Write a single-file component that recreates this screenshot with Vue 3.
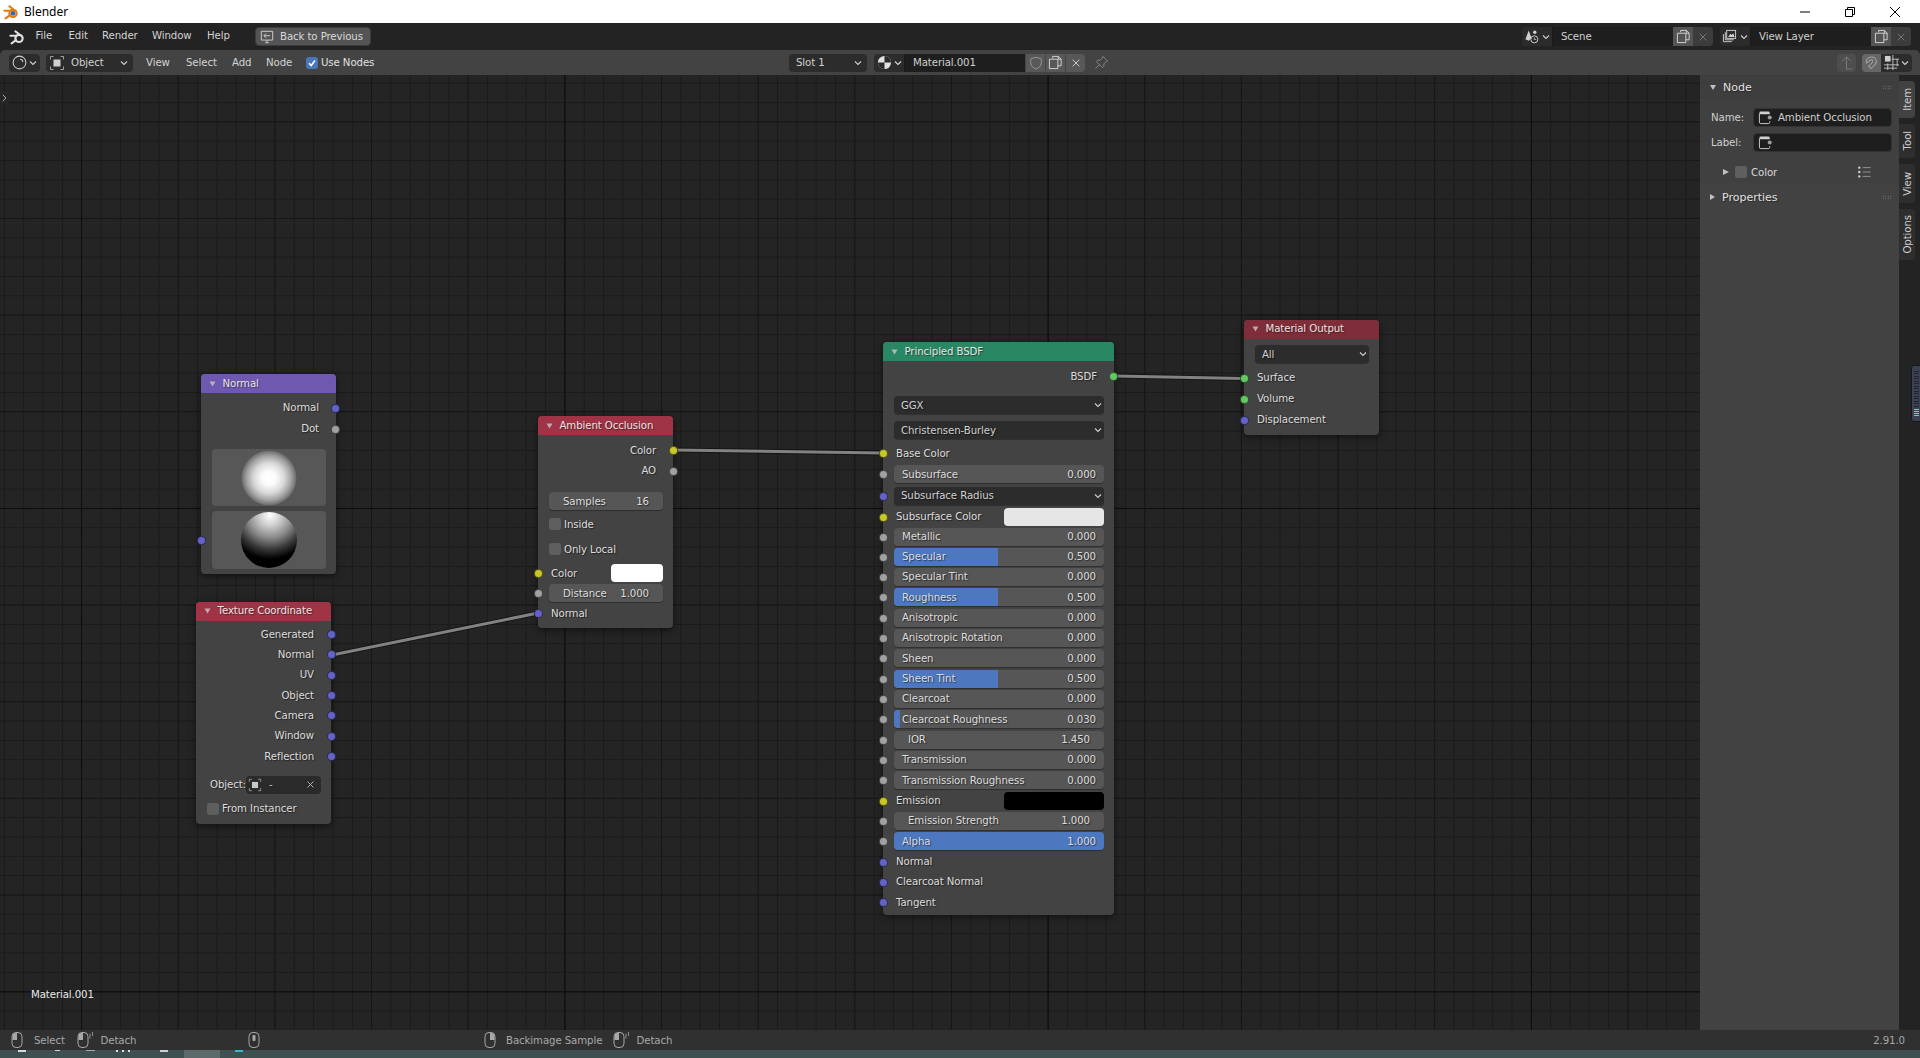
<template>
  <div class="app">
    <!-- shared icon shapes -->
    <svg class="defs" width="0" height="0">
      <defs>
        <symbol id="i-logo" viewBox="0 0 16 16">
          <circle cx="10" cy="9.4" r="3.6" fill="none" stroke="currentColor" stroke-width="2.2" />
          <path d="M10 5 6.400 2.400M7 6.800H1.400M7 11.200 2.600 14.400" fill="none" stroke="currentColor" stroke-width="2.100" stroke-linecap="round" />
        </symbol>
        <symbol id="i-shader" viewBox="0 0 16 16">
          <circle cx="8" cy="8" r="6.800" fill="none" stroke="currentColor" stroke-width="1.100" />
          <path d="M8.600 4.600c1.500 0 2.800 1.200 2.900 2.800" fill="none" stroke="currentColor" stroke-width="1.100" />
        </symbol>
        <symbol id="i-object" viewBox="0 0 16 16">
          <rect x="4.500" y="4.500" width="7" height="7" fill="currentColor" />
          <path d="M1.500 4.500v-3h3M11.500 1.500h3v3M14.500 11.500v3h-3M4.500 14.500h-3v-3" fill="none" stroke="currentColor" stroke-opacity=".7" />
        </symbol>
        <symbol id="i-chevron" viewBox="0 0 8 6">
          <path d="M1 1.500 4 4.500 7 1.500" fill="none" stroke="currentColor" stroke-width="1.100" />
        </symbol>
        <symbol id="i-x" viewBox="0 0 12 12">
          <path d="M2 2l8 8M10 2l-8 8" fill="none" stroke="currentColor" stroke-width="1.100" />
        </symbol>
        <symbol id="i-copy" viewBox="0 0 16 16">
          <path d="M5 3.500V1.500h6l3 3v7h-3.500M11 1.500v3h3M1.500 4.500H10.500V14.500H1.500z" fill="none" stroke="currentColor" stroke-width="1" />
        </symbol>
        <symbol id="i-shield" viewBox="0 0 16 16">
          <path d="M2 3.200 8 1.500l6 1.700v5C14 11.500 11 13.600 8 14.800 5 13.600 2 11.500 2 8.200z" fill="none" stroke="currentColor" stroke-width="1" />
        </symbol>
        <symbol id="i-pin" viewBox="0 0 16 16">
          <path d="M9.500 1.500 14.500 6.500 13 7 10.500 9.500 10.500 12 9 13.500 2.500 7 4 5.500 6.500 5.500 9 3zM5.500 10.500 1.500 14.500" fill="none" stroke="currentColor" stroke-width="1" />
        </symbol>
        <symbol id="i-scene" viewBox="0 0 16 16">
          <path d="M5 1.500 8 9.500 5 12.500 1.500 11z" fill="currentColor" />
          <circle cx="11.500" cy="3.500" r="1.800" fill="currentColor" />
          <circle cx="11" cy="11" r="3.800" fill="none" stroke="currentColor" />
          <path d="M11 9v2.200h2" fill="none" stroke="currentColor" stroke-width=".8" />
        </symbol>
        <symbol id="i-layer" viewBox="0 0 16 16">
          <rect x="5" y="1.500" width="9.500" height="8.500" fill="none" stroke="currentColor" />
          <path d="M6.500 8.500 9 5l1.500 1.500L12 4.500l1.500 4z" fill="currentColor" />
          <path d="M3.500 3.500v8h9M1.500 5.500v8h9" fill="none" stroke="currentColor" />
        </symbol>
        <symbol id="i-back" viewBox="0 0 16 16">
          <path d="M1.500 1.500h13v10h-13zM6 14.500h4M8 11.500v3M11.500 6.500h-7M7 4 4.500 6.500 7 9" fill="none" stroke="currentColor" />
        </symbol>
        <symbol id="i-up" viewBox="0 0 16 16">
          <path d="M8 15V2M3.500 6.500 8 2l4.500 4.500M8 15h6" fill="none" stroke="currentColor" />
        </symbol>
        <symbol id="i-magnet" viewBox="0 0 16 16">
          <path d="M2.500 8.500A5.500 5.500 0 0 1 13 5.500c.8 2.200-.3 4-1.700 5.200L7.500 14.500 5 12l3.800-3.800c1.200-1.200.6-3-1-3-1.400 0-2 .8-2.800 1.800z" fill="none" stroke="currentColor" stroke-width="1.100" />
        </symbol>
        <symbol id="i-snap" viewBox="0 0 16 16">
          <rect x="1" y="1" width="6" height="6" fill="currentColor" />
          <path d="M9.500 0v16M14 4v8M0 10.500h16M4 9v7M8 4.500h8M0 14h14" fill="none" stroke="currentColor" stroke-width=".9" />
        </symbol>
        <symbol id="i-nodefield" viewBox="0 0 16 16">
          <path d="M1.500 3A1.500 1.500 0 0 1 3 1.500h8A1.500 1.500 0 0 1 12.500 3v1.500h-11z" fill="currentColor" />
          <path d="M1.500 4v9A1.500 1.500 0 0 0 3 14.500h8A1.500 1.500 0 0 0 12.500 13v-1" fill="none" stroke="currentColor" />
          <circle cx="12.500" cy="8" r="2.200" fill="currentColor" fill-opacity=".7" />
        </symbol>
        <symbol id="i-list" viewBox="0 0 16 16">
          <circle cx="2" cy="3" r="1.400" fill="currentColor" />
          <circle cx="2" cy="8" r="1.400" fill="currentColor" />
          <circle cx="2" cy="13" r="1.400" fill="currentColor" />
          <path d="M6 3h9M6 8h9M6 13h9" fill="none" stroke="currentColor" stroke-opacity=".7" />
        </symbol>
        <symbol id="i-mouse-left" viewBox="0 0 12 16">
          <rect x="1" y=".5" width="10" height="15" rx="4" fill="none" stroke="currentColor" />
          <path d="M1.500 8V4.500A3.500 3.500 0 0 1 5 1h1v7z" fill="currentColor" />
        </symbol>
        <symbol id="i-mouse-right" viewBox="0 0 12 16">
          <rect x="1" y=".5" width="10" height="15" rx="4" fill="none" stroke="currentColor" />
          <path d="M10.500 8V4.500A3.500 3.500 0 0 0 7 1H6v7z" fill="currentColor" />
        </symbol>
        <symbol id="i-mouse-mid" viewBox="0 0 12 16">
          <rect x="1" y=".5" width="10" height="15" rx="4" fill="none" stroke="currentColor" />
          <rect x="4.500" y="3" width="3" height="6" rx="1" fill="currentColor" />
        </symbol>
        <symbol id="i-mouse-drag" viewBox="0 0 16 16">
          <rect x="1" y=".5" width="10" height="15" rx="4" fill="none" stroke="currentColor" />
          <path d="M1.500 8V4.500A3.500 3.500 0 0 1 5 1h1v7z" fill="currentColor" />
          <path d="M13 1.500v5M15.500 0v4" fill="none" stroke="currentColor" stroke-width=".8" />
        </symbol>
      </defs>
    </svg>

    <div class="titlebar">
      <svg class="title-logo" width="16" height="16" viewBox="0 0 16 16">
        <use href="#i-logo" width="16" height="16" />
        <circle cx="10" cy="9.400" r="2.300" fill="#2b6aa8" />
      </svg>
      <span class="title-text">Blender</span>
      <div class="win-controls">
        <svg width="10" height="10" viewBox="0 0 10 10"><path d="M0 5h10" stroke="#000" fill="none" /></svg>
        <svg width="10" height="10" viewBox="0 0 10 10"><path d="M.5 2.500h7v7h-7zM2.500 2.500v-2h7v7h-2" stroke="#000" fill="none" /></svg>
        <svg width="10" height="10" viewBox="0 0 10 10"><path d="M0 0l10 10M10 0 0 10" stroke="#000" fill="none" /></svg>
      </div>
    </div>

    <div class="topbar">
      <svg class="top-logo" width="16" height="16"><use href="#i-logo" /></svg>
      <span v-for="m in topMenus" :key="m.label" class="top-menu" :class="m.cls">{{ m.label }}</span>
      <button class="back-btn">
        <svg width="14" height="14"><use href="#i-back" /></svg>
        <span>Back to Previous</span>
      </button>
      <div class="top-right">
        <div class="id-group">
          <span class="id-type">
            <svg width="15" height="15"><use href="#i-scene" /></svg>
            <svg width="8" height="6"><use href="#i-chevron" /></svg>
          </span>
          <span class="id-name">Scene</span>
          <span class="id-btn"><svg width="15" height="15"><use href="#i-copy" /></svg></span>
          <span class="id-btn id-dim"><svg width="10" height="10"><use href="#i-x" /></svg></span>
        </div>
        <div class="id-group">
          <span class="id-type">
            <svg width="15" height="15"><use href="#i-layer" /></svg>
            <svg width="8" height="6"><use href="#i-chevron" /></svg>
          </span>
          <span class="id-name">View Layer</span>
          <span class="id-btn"><svg width="15" height="15"><use href="#i-copy" /></svg></span>
          <span class="id-btn id-dim"><svg width="10" height="10"><use href="#i-x" /></svg></span>
        </div>
      </div>
    </div>

    <div class="ed-header">
      <div class="hdr-left">
        <span class="drop drop-type">
          <svg width="15" height="15"><use href="#i-shader" /></svg>
          <svg width="8" height="6"><use href="#i-chevron" /></svg>
        </span>
        <span class="drop drop-object">
          <svg width="16" height="16"><use href="#i-object" /></svg>
          <span class="drop-label">Object</span>
          <svg width="8" height="6"><use href="#i-chevron" /></svg>
        </span>
        <span class="hdr-menu hm-view">View</span>
        <span class="hdr-menu hm-select">Select</span>
        <span class="hdr-menu hm-add">Add</span>
        <span class="hdr-menu hm-node">Node</span>
        <span class="use-nodes">
          <span class="check-on">
            <svg width="10" height="10" viewBox="0 0 10 10"><path d="M2 5.200 4.200 7.500 8 2.500" fill="none" stroke="#fff" stroke-width="1.600" /></svg>
          </span>
          Use Nodes
        </span>
      </div>
      <span class="drop drop-slot">
        <span class="drop-label">Slot 1</span>
        <svg width="8" height="6"><use href="#i-chevron" /></svg>
      </span>
      <div class="mat-group">
        <span class="mat-type">
          <svg width="15" height="15" viewBox="0 0 16 16">
            <circle cx="8" cy="8" r="7" fill="#e0e0e0" />
            <path d="M8 1a7 7 0 0 1 7 7H8zM8 8v7a7 7 0 0 1-7-7z" fill="#2a2a2a" />
          </svg>
          <svg width="8" height="6"><use href="#i-chevron" /></svg>
        </span>
        <span class="mat-name">Material.001</span>
        <span class="mat-btn"><svg class="shield" width="14" height="14"><use href="#i-shield" /></svg></span>
        <span class="mat-btn"><svg width="15" height="15"><use href="#i-copy" /></svg></span>
        <span class="mat-btn"><svg width="10" height="10"><use href="#i-x" /></svg></span>
      </div>
      <svg class="pin" width="15" height="15"><use href="#i-pin" /></svg>
      <div class="hdr-right">
        <span class="tool-btn tool-up"><svg width="15" height="15"><use href="#i-up" /></svg></span>
        <span class="tool-btn tool-magnet"><svg width="15" height="15"><use href="#i-magnet" /></svg></span>
        <span class="tool-btn tool-snap">
          <svg width="15" height="15"><use href="#i-snap" /></svg>
          <svg width="8" height="6"><use href="#i-chevron" /></svg>
        </span>
      </div>
    </div>

    <div class="ed-body">
      <div class="canvas">
        <span class="region-arrow">
          <svg width="5" height="8" viewBox="0 0 5 8"><path d="M.8.800 4 4 .8 7.200" fill="none" stroke="#a8a8a8" /></svg>
        </span>

        <svg class="links" width="1700" height="955">
          <g v-for="l in links" :key="l">
            <path :d="l" class="link-out" />
            <path :d="l" class="link-in" />
          </g>
        </svg>

        <div v-for="n in nodes" :key="n.id" class="node" :class="'node-' + n.id">
          <div class="node-head">
            <svg class="node-tri" width="7" height="6" viewBox="0 0 7 6"><path d="M.500.500h6L3.500 5.500z" fill="#c8c8c8" fill-opacity=".8" /></svg>
            <span>{{ n.title }}</span>
          </div>
          <div
            v-for="(r, i) in n.rows"
            :key="i"
            class="row"
            :class="'row-' + r.kind"
            :style="{ height: r.h + 'px' }"
          >
            <i v-if="r.sock" class="socket" :class="[r.kind === 'out' ? 'socket-out' : 'socket-in', 'sock-' + r.sock]" />

            <span v-if="r.kind === 'out'" class="lbl-out">{{ r.label }}</span>
            <span v-else-if="r.kind === 'in'" class="lbl-in">{{ r.label }}</span>

            <div v-else-if="r.kind === 'select'" class="field field-select">
              <span>{{ r.label }}</span>
              <svg width="8" height="6"><use href="#i-chevron" /></svg>
            </div>

            <div v-else-if="r.kind === 'slider'" class="field field-slider" :class="{ 'field-num': r.num }">
              <div class="slider-fill" :style="{ width: (r.fill || 0) + '%' }"></div>
              <span class="slider-lbl">{{ r.label }}</span>
              <span class="slider-val">{{ r.value }}</span>
            </div>

            <template v-else-if="r.kind === 'color'">
              <span class="lbl-in">{{ r.label }}</span>
              <span class="swatch" :style="{ width: r.w + 'px', background: r.color }"></span>
            </template>

            <label v-else-if="r.kind === 'check'" class="check-row">
              <span class="check-box"></span>
              <span>{{ r.label }}</span>
            </label>

            <div v-else-if="r.kind === 'sphere'" class="sphere-box">
              <div class="sphere" :class="r.cls"></div>
            </div>

            <div v-else-if="r.kind === 'object'" class="object-row">
              <span class="object-lbl">Object:</span>
              <span class="object-field">
                <svg width="14" height="14"><use href="#i-object" /></svg>
                <span class="object-dash">-</span>
                <svg width="9" height="9"><use href="#i-x" /></svg>
              </span>
            </div>
          </div>
        </div>

        <span class="canvas-label">Material.001</span>
      </div>

      <aside class="sidebar">
        <div class="panel-head">
          <svg width="6" height="5" viewBox="0 0 6 5"><path d="M0 0h6L3 5z" fill="#c0c0c0" /></svg>
          <span>Node</span>
          <i class="grip"></i>
        </div>
        <div class="panel-body">
          <div class="prop-row">
            <span class="prop-lbl">Name:</span>
            <span class="prop-field">
              <svg width="15" height="15"><use href="#i-nodefield" /></svg>
              <span>Ambient Occlusion</span>
            </span>
          </div>
          <div class="prop-row">
            <span class="prop-lbl">Label:</span>
            <span class="prop-field">
              <svg width="15" height="15"><use href="#i-nodefield" /></svg>
            </span>
          </div>
          <div class="color-row">
            <svg width="6" height="6" viewBox="0 0 6 6"><path d="M0 0l6 3-6 3z" fill="#c0c0c0" /></svg>
            <span class="color-box"></span>
            <span>Color</span>
            <svg class="color-list" width="15" height="14"><use href="#i-list" /></svg>
          </div>
        </div>
        <div class="panel-head panel-props">
          <svg width="5" height="6" viewBox="0 0 5 6"><path d="M0 0l5 3-5 3z" fill="#c0c0c0" /></svg>
          <span>Properties</span>
          <i class="grip"></i>
        </div>
      </aside>

      <div class="tabs">
        <span v-for="t in tabs" :key="t.label" class="tab" :class="{ 'tab-active': t.active }" :style="{ height: t.h + 'px' }">
          <span class="tab-text">{{ t.label }}</span>
        </span>
      </div>
    </div>

    <div class="statusbar">
      <svg class="st-left" width="12" height="16"><use href="#i-mouse-left" /></svg>
      <span class="st-select">Select</span>
      <svg width="16" height="16"><use href="#i-mouse-drag" /></svg>
      <span class="st-detach st-detach-a">Detach</span>
      <svg width="12" height="16"><use href="#i-mouse-mid" /></svg>
      <svg class="st-right" width="12" height="16"><use href="#i-mouse-right" /></svg>
      <span class="st-back">Backimage Sample</span>
      <svg width="16" height="16"><use href="#i-mouse-drag" /></svg>
      <span class="st-detach">Detach</span>
      <span class="st-version">2.91.0</span>
    </div>

    <div class="taskbar">
      <i
        v-for="t in taskbarMarks"
        :key="t.x"
        class="task-mark"
        :style="{ left: t.x + 'px', width: t.w + 'px', height: t.h + 'px', background: t.c }"
      ></i>
    </div>

    <div class="edge-grip"><i class="edge-dashes"></i><i class="edge-teal"></i></div>
  </div>
</template>

<script setup>
const ROW = 20.33

const out = (label, sock, h = ROW) => ({ kind: 'out', label, sock, h })
const inp = (label, sock, h = ROW) => ({ kind: 'in', label, sock, h })
const gap = (h) => ({ kind: 'gap', h })
const select = (label, sock, h = ROW) => ({ kind: 'select', label, sock, h })
const slider = (label, value, fill = 0, h = ROW) => ({ kind: 'slider', label, value, fill, sock: 'grey', h })
const num = (label, value, sock = 'grey', h = ROW) => ({ kind: 'slider', label, value, num: true, sock, h })
const color = (label, c, w, h = ROW) => ({ kind: 'color', label, color: c, w, sock: 'yellow', h })
const check = (label, h = ROW) => ({ kind: 'check', label, h })

const topMenus = [
  { label: 'File', cls: 'tm-file' },
  { label: 'Edit', cls: 'tm-edit' },
  { label: 'Render', cls: 'tm-render' },
  { label: 'Window', cls: 'tm-window' },
  { label: 'Help', cls: 'tm-help' },
]

const links = ['M673 375 L883 378', 'M332 580 L538 538', 'M1114 301 L1243 303.500']

const nodes = [
  {
    id: 'normal',
    title: 'Normal',
    rows: [
      gap(4),
      out('Normal', 'blue', 21),
      out('Dot', 'grey', 21),
      gap(10),
      { kind: 'sphere', cls: 'sphere-a', h: 57 },
      gap(5),
      { kind: 'sphere', cls: 'sphere-b', h: 58, sock: 'blue' },
      gap(5),
    ],
  },
  {
    id: 'texcoord',
    title: 'Texture Coordinate',
    rows: [
      gap(3),
      out('Generated', 'blue'),
      out('Normal', 'blue'),
      out('UV', 'blue'),
      out('Object', 'blue'),
      out('Camera', 'blue'),
      out('Window', 'blue'),
      out('Reflection', 'blue'),
      gap(8.700),
      { kind: 'object', h: 20 },
      gap(4),
      check('From Instancer', 20),
      gap(4.700),
    ],
  },
  {
    id: 'ao',
    title: 'Ambient Occlusion',
    rows: [
      gap(5),
      out('Color', 'yellow', 20),
      out('AO', 'grey', 21),
      gap(10),
      { ...num('Samples', '16', null), h: 20 },
      gap(2),
      check('Inside', 22),
      gap(3),
      check('Only Local', 22),
      gap(3),
      color('Color', '#ffffff', 52, 20),
      num('Distance', '1.000', 'grey', 20),
      inp('Normal', 'blue', 20),
      gap(5),
    ],
  },
  {
    id: 'bsdf',
    title: 'Principled BSDF',
    rows: [
      gap(5),
      out('BSDF', 'green', 20),
      gap(6.500),
      select('GGX', null, 25),
      select('Christensen-Burley', null, 25),
      inp('Base Color', 'yellow', 21),
      slider('Subsurface', '0.000', 0, 21),
      select('Subsurface Radius', 'blue', 22),
      color('Subsurface Color', '#e6e6e6', 100, 20),
      slider('Metallic', '0.000', 0, 20),
      slider('Specular', '0.500', 49.400),
      slider('Specular Tint', '0.000'),
      slider('Roughness', '0.500', 49.400),
      slider('Anisotropic', '0.000'),
      slider('Anisotropic Rotation', '0.000'),
      slider('Sheen', '0.000'),
      slider('Sheen Tint', '0.500', 49.400),
      slider('Clearcoat', '0.000'),
      slider('Clearcoat Roughness', '0.030', 3),
      num('IOR', '1.450'),
      slider('Transmission', '0.000'),
      slider('Transmission Roughness', '0.000'),
      color('Emission', '#000000', 100),
      num('Emission Strength', '1.000'),
      slider('Alpha', '1.000', 100),
      inp('Normal', 'blue'),
      inp('Clearcoat Normal', 'blue'),
      inp('Tangent', 'blue'),
      gap(3),
    ],
  },
  {
    id: 'output',
    title: 'Material Output',
    rows: [
      gap(4),
      select('All', null, 22),
      gap(2),
      inp('Surface', 'green', 21),
      inp('Volume', 'green', 21),
      inp('Displacement', 'blue', 21),
      gap(5),
    ],
  },
]

const tabs = [
  { label: 'Item', h: 37, active: true },
  { label: 'Tool', h: 34 },
  { label: 'View', h: 39 },
  { label: 'Options', h: 51 },
]

const taskbarMarks = [
  { x: 18, w: 8, h: 2, c: '#d8d8d8' },
  { x: 55, w: 5, h: 1, c: '#d8d8d8' },
  { x: 86, w: 9, h: 1, c: '#a8a8a8' },
  { x: 116, w: 2, h: 2, c: '#e0e0e0' },
  { x: 122, w: 2, h: 2, c: '#e0e0e0' },
  { x: 128, w: 2, h: 2, c: '#e0e0e0' },
  { x: 160, w: 8, h: 2, c: '#d0d0d0' },
  { x: 184, w: 36, h: 8, c: '#5d6a6a' },
  { x: 235, w: 8, h: 2, c: '#2bbcd0' },
]
</script>

<style scoped>
.app {
  position: relative;
  width: 1920px;
  height: 1058px;
  display: flex;
  flex-direction: column;
  overflow: hidden;
  background: #232323;
  color: #d8d8d8;
  font-family: "DejaVu Sans", sans-serif;
  font-size: 10.2px;
  letter-spacing: -0.1px;
}
.defs {
  position: absolute;
}
svg {
  flex-shrink: 0;
  display: block;
}

/* window title */
.titlebar {
  height: 23px;
  flex-shrink: 0;
  display: flex;
  align-items: center;
  background: #fff;
  color: #000;
  font-family: "Noto Sans", sans-serif;
  font-size: 12px;
  letter-spacing: 0;
}
.title-logo {
  margin-left: 3px;
  color: #e8790f;
}
.title-text {
  margin-left: 5px;
}
.win-controls {
  margin-left: auto;
  display: flex;
  gap: 35px;
  padding-right: 20px;
}

/* top bar */
.topbar {
  height: 27px;
  flex-shrink: 0;
  display: flex;
  align-items: center;
  background: #232323;
}
.top-logo {
  margin-left: 9px;
  margin-right: 10.500px;
  color: #e0e0e0;
}
.top-menu {
  margin-top: -2px;
  color: #d4d4d4;
}
.tm-file { width: 33px; }
.tm-edit { width: 33.500px; }
.tm-render { width: 50px; }
.tm-window { width: 55px; }
.tm-help { width: 48px; }
.back-btn {
  width: 116px;
  height: 19px;
  padding: 0 0 0 4px;
  display: flex;
  align-items: center;
  gap: 6px;
  border: 1px solid #3b3b3b;
  border-radius: 4px;
  background: #545454;
  color: #d8d8d8;
  font: inherit;
  letter-spacing: inherit;
  white-space: nowrap;
}
.top-right {
  margin-left: auto;
  display: flex;
  gap: 7px;
  padding-right: 9px;
}
.id-group {
  display: flex;
  height: 19px;
  border-radius: 4px;
  overflow: hidden;
  box-shadow: inset 0 0 0 1px #333;
}
.id-type {
  width: 31px;
  display: flex;
  align-items: center;
  justify-content: center;
  gap: 3px;
  background: #2b2b2b;
  border-right: 1px solid #1a1a1a;
  box-sizing: border-box;
  color: #d0d0d0;
}
.id-name {
  width: 120px;
  display: flex;
  align-items: center;
  padding-left: 8px;
  background: #1e1e1e;
  box-sizing: border-box;
  color: #d0d0d0;
}
.id-btn {
  width: 20px;
  display: flex;
  align-items: center;
  justify-content: center;
  background: #545454;
  color: #d8d8d8;
}
.id-dim {
  background: #3c3c3c;
  color: #7c7c7c;
}

/* editor header */
.ed-header {
  height: 25px;
  flex-shrink: 0;
  display: flex;
  align-items: center;
  background: #434343;
  border-radius: 5px 5px 0 0;
}
.hdr-left {
  width: 789px;
  flex-shrink: 0;
  display: flex;
  align-items: center;
}
.drop {
  height: 18px;
  display: flex;
  align-items: center;
  box-sizing: border-box;
  background: #2c2c2c;
  border-radius: 4px;
  color: #d0d0d0;
}
.drop-type {
  width: 31px;
  margin-left: 9px;
  padding-left: 3px;
  gap: 2px;
}
.drop-object {
  width: 87px;
  margin-left: 6px;
  margin-right: 13px;
  padding: 0 5px 0 3px;
}
.drop-label {
  flex: 1;
  margin-left: 6px;
}
.drop-slot {
  width: 78px;
  padding: 0 5px 0 2px;
}
.drop-slot .drop-label {
  margin-left: 5px;
}
.hdr-menu {
  color: #d4d4d4;
}
.hm-view { width: 40px; }
.hm-select { width: 46px; }
.hm-add { width: 34px; }
.hm-node { width: 40px; }
.use-nodes {
  display: flex;
  align-items: center;
  gap: 3px;
  color: #e0e0e0;
}
.check-on {
  width: 12px;
  height: 12px;
  display: flex;
  align-items: center;
  justify-content: center;
  background: #4a76bd;
  border-radius: 3px;
}
.mat-group {
  margin-left: 7px;
  height: 18px;
  display: flex;
  border-radius: 4px;
  overflow: hidden;
}
.mat-type {
  width: 31px;
  display: flex;
  align-items: center;
  justify-content: center;
  gap: 2px;
  background: #2c2c2c;
  border-right: 1px solid #1a1a1a;
  box-sizing: border-box;
}
.mat-name {
  width: 120px;
  padding-left: 8px;
  box-sizing: border-box;
  display: flex;
  align-items: center;
  background: #1e1e1e;
  color: #d0d0d0;
}
.mat-btn {
  width: 20px;
  display: flex;
  align-items: center;
  justify-content: center;
  background: #585858;
  color: #d8d8d8;
  border-left: 1px solid #454545;
  box-sizing: border-box;
}
.shield {
  color: #9a9a9a;
}
.pin {
  margin-left: 9px;
  color: #8a8a8a;
}
.hdr-right {
  margin-left: auto;
  display: flex;
  padding-right: 8px;
}
.tool-btn {
  height: 18px;
  display: flex;
  align-items: center;
  justify-content: center;
}
.tool-up {
  width: 19px;
  margin-right: 6px;
  border-radius: 4px;
  background: #4e4e4e;
  color: #7c7c7c;
}
.tool-magnet {
  width: 19px;
  border-radius: 4px 0 0 4px;
  background: #666;
  color: #a0a0a0;
}
.tool-snap {
  width: 31px;
  gap: 2px;
  border-radius: 0 4px 4px 0;
  background: #2c2c2c;
  color: #d0d0d0;
}

/* node canvas */
.ed-body {
  height: 955px;
  flex-shrink: 0;
  display: flex;
}
.canvas {
  position: relative;
  width: 1700px;
  flex-shrink: 0;
  overflow: hidden;
  background-color: #242424;
  background-image:
    linear-gradient(90deg, #0e0e0e 1px, transparent 1px),
    linear-gradient(#0e0e0e 1px, transparent 1px),
    linear-gradient(90deg, #161616 1px, transparent 1px),
    linear-gradient(#161616 1px, transparent 1px),
    linear-gradient(90deg, #1a1a1a 1px, transparent 1px),
    linear-gradient(#1a1a1a 1px, transparent 1px);
  background-size:
    483.33px 100%,
    100% 483.33px,
    96.67px 100%,
    100% 96.67px,
    19.33px 100%,
    100% 19.33px;
  background-position:
    81px 0,
    0 433px,
    81px 0,
    0 46.3px,
    3.9px 0,
    0 7.7px;
}
.region-arrow {
  position: absolute;
  left: 0;
  top: 16px;
  width: 9px;
  height: 14px;
  padding: 3px 0 0 2px;
  box-sizing: border-box;
  background: #262626;
  border-radius: 0 4px 4px 0;
}
.links {
  position: absolute;
  left: 0;
  top: 0;
}
.link-out {
  fill: none;
  stroke: rgba(0, 0, 0, 0.4);
  stroke-width: 5;
}
.link-in {
  fill: none;
  stroke: #828282;
  stroke-width: 3;
}
.canvas-label {
  position: absolute;
  left: 31px;
  top: 914px;
  color: #e8e8e8;
}

/* nodes */
.node {
  position: absolute;
  background: #434343;
  border-radius: 4px;
  box-shadow: 0 2px 7px rgba(0, 0, 0, 0.55);
}
.node-normal { left: 201px; top: 299px; width: 135px; }
.node-texcoord { left: 196px; top: 527px; width: 135px; }
.node-ao { left: 538px; top: 341px; width: 135px; }
.node-bsdf { left: 883px; top: 267px; width: 231px; }
.node-output { left: 1244px; top: 245px; width: 135px; }

.node-head {
  height: 19px;
  display: flex;
  align-items: center;
  gap: 6.500px;
  padding-left: 8px;
  border-radius: 4px 4px 0 0;
  color: #e4e4e4;
  text-shadow: 1px 1px 1px rgba(0, 0, 0, 0.45);
}
.node-normal .node-head { background: #6f58b0; }
.node-texcoord .node-head { background: #a03345; padding-bottom: 2px; height: 17px; }
.node-ao .node-head { background: #a03345; }
.node-bsdf .node-head { background: #2a8764; }
.node-output .node-head { background: #7f2d39; padding-bottom: 2px; height: 17px; }

.row {
  position: relative;
  display: flex;
  align-items: center;
  padding: 0 10px 0 11px;
  color: #dcdcdc;
  text-shadow: 1px 1px 1px rgba(0, 0, 0, 0.5);
}
.socket {
  position: absolute;
  top: 50%;
  width: 7px;
  height: 7px;
  margin-top: -4px;
  border: .5px solid rgba(0, 0, 0, 0.55);
  border-radius: 50%;
}
.socket-in { left: -4px; }
.socket-out { right: -4px; }
.node-texcoord .socket-out,
.node-ao .socket-out { right: -5px; }
.sock-blue { background: #6363c7; }
.sock-grey { background: #a1a1a1; }
.sock-yellow { background: #c7c729; }
.sock-green { background: #63c763; }

.lbl-out {
  margin-left: auto;
  padding-right: 7px;
}
.lbl-in {
  padding-left: 2px;
}
.field {
  position: relative;
  flex: 1;
  height: 18px;
  display: flex;
  align-items: center;
  justify-content: space-between;
  overflow: hidden;
  border-radius: 4px;
  box-shadow: 0 1px 1px rgba(0, 0, 0, 0.3);
}
.field-select {
  padding: 0 2px 0 7px;
  background: #2c2c2c;
  color: #d0d0d0;
}
.field-slider {
  padding: 0 8px;
  background: #565656;
}
.field-num {
  padding: 0 14px;
}
.slider-fill {
  position: absolute;
  left: 0;
  top: 0;
  bottom: 0;
  background: #4d78bf;
}
.slider-lbl,
.slider-val {
  position: relative;
}
.swatch {
  margin-left: auto;
  height: 18px;
  border-radius: 4px;
}
.check-row {
  display: flex;
  align-items: center;
  gap: 3px;
}
.check-box {
  width: 12px;
  height: 12px;
  background: #5f5f5f;
  border-radius: 3px;
}
.sphere-box {
  flex: 1;
  height: 100%;
  display: flex;
  align-items: center;
  justify-content: center;
  background: #575757;
  border-radius: 4px;
}
.sphere {
  width: 56px;
  height: 56px;
  border-radius: 50%;
}
.sphere-a {
  background: radial-gradient(circle closest-side at 50% 50%, #fff 0, #fbfbfb 25%, #d8d8d8 55%, #a0a0a0 80%, #707070 96%, #505050 100%);
}
.sphere-b {
  background: radial-gradient(circle 56px at 52% 6%, #fff 0, #d0d0d0 18%, #8a8a8a 40%, #3a3a3a 60%, #000 78%);
}
.object-row {
  flex: 1;
  display: flex;
  align-items: center;
  padding-left: 3px;
}
.object-lbl {
  position: relative;
  z-index: 1;
  width: 36px;
  flex-shrink: 0;
}
.object-field {
  flex: 1;
  height: 18px;
  display: flex;
  align-items: center;
  padding: 0 6px 0 2px;
  background: #2a2a2a;
  border-radius: 4px;
  color: #c8c8c8;
}
.object-dash {
  flex: 1;
  margin-left: 7px;
}

/* sidebar */
.sidebar {
  width: 199px;
  flex-shrink: 0;
  background: #424242;
}
.panel-head {
  height: 24px;
  display: flex;
  align-items: center;
  padding: 0 7px 0 10px;
  gap: 7px;
  background: #3e3e3e;
  color: #e0e0e0;
  font-size: 11px;
  letter-spacing: 0;
  text-shadow: 1px 1px 1px rgba(0, 0, 0, 0.4);
}
.panel-props {
  height: 28px;
  background: #424242;
}
.grip {
  margin-left: auto;
  width: 10px;
  height: 5px;
  background-image: radial-gradient(#8a8a8a 0.6px, transparent 0.8px);
  background-size: 2.500px 2.500px;
}
.panel-body {
  height: 84px;
  padding-top: 8px;
  box-sizing: border-box;
  background: #404040;
}
.prop-row {
  height: 20px;
  margin-bottom: 5.500px;
  display: flex;
  align-items: center;
  padding: 0 7px 0 11px;
}
.prop-lbl {
  width: 42px;
  flex-shrink: 0;
  color: #d0d0d0;
}
.prop-field {
  flex: 1;
  height: 19px;
  display: flex;
  align-items: center;
  gap: 5px;
  padding-left: 4px;
  background: #1e1e1e;
  border: 1px solid #333;
  box-sizing: border-box;
  border-radius: 4px;
  color: #d0d0d0;
}
.color-row {
  height: 14px;
  margin-top: 12.500px;
  display: flex;
  align-items: center;
  padding: 0 27px 0 23px;
  color: #d8d8d8;
}
.color-box {
  width: 12px;
  height: 12px;
  margin: 0 4px 0 6px;
  background: #5f5f5f;
  border-radius: 2px;
}
.color-list {
  margin-left: auto;
  color: #c8c8c8;
}

/* region tabs */
.tabs {
  width: 16px;
  flex-shrink: 0;
  display: flex;
  flex-direction: column;
  gap: 6px;
  padding-top: 6px;
}
.tab {
  display: flex;
  align-items: center;
  justify-content: center;
  background: #2e2e2e;
  border-radius: 0 4px 4px 0;
  color: #d0d0d0;
}
.tab-active {
  background: #424242;
}
.tab-text {
  writing-mode: vertical-rl;
  transform: rotate(180deg);
}

/* status bar */
.statusbar {
  height: 20px;
  flex-shrink: 0;
  display: flex;
  align-items: center;
  background: #303030;
  color: #a8a8a8;
}
.st-left { margin-left: 11px; }
.st-select {
  width: 43px;
  margin-left: 11px;
}
.st-detach { margin-left: 7.500px; }
.st-detach-a { width: 147.500px; flex-shrink: 0; margin-left: 7.500px; }
.st-right { margin-left: 224px; }
.st-back {
  width: 107px;
  margin-left: 10px;
}
.st-version {
  margin-left: auto;
  padding-right: 15px;
}

/* strip of the OS taskbar at the bottom edge */
.taskbar {
  position: relative;
  height: 8px;
  flex-shrink: 0;
  background: #3e5050;
}
.task-mark {
  position: absolute;
  top: 0;
}
.edge-grip {
  position: absolute;
  left: 1911px;
  top: 365px;
  width: 12px;
  height: 57px;
  background: #3b4052;
  border: 1px solid #15171f;
  box-sizing: border-box;
  border-radius: 3px;
}
.edge-dashes {
  position: absolute;
  left: 2px;
  top: 5px;
  width: 5px;
  height: 37px;
  background: repeating-linear-gradient(#23252e 0 1px, transparent 1px 2.500px);
}
.edge-teal {
  position: absolute;
  left: 2px;
  top: 43px;
  width: 5px;
  height: 8px;
  background: repeating-linear-gradient(#5fd8b8 0 1px, transparent 1px 2px);
}
</style>

<style>
html,
body {
  margin: 0;
  overflow: hidden;
  background: #232323;
}
</style>
